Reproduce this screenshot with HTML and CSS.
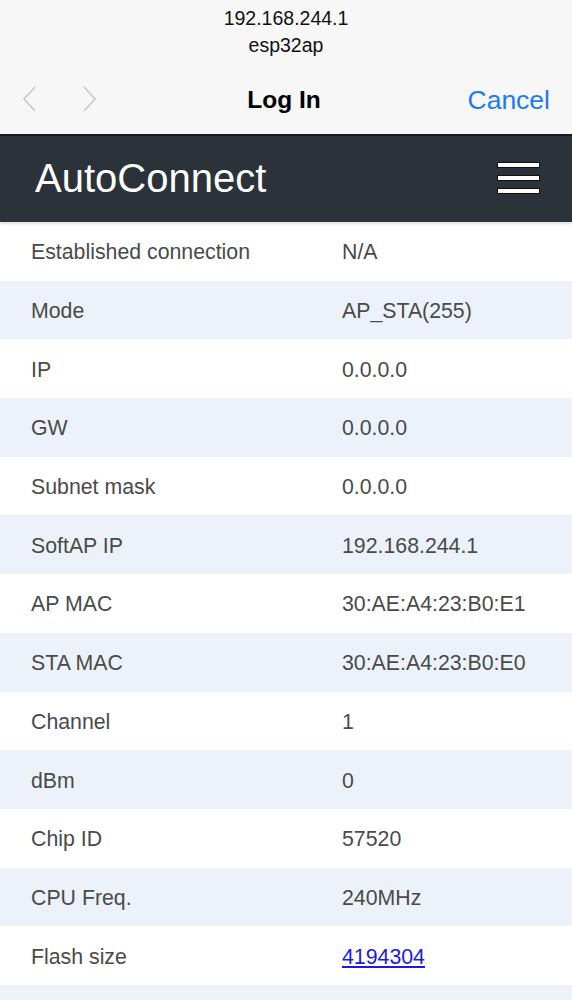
FILE: index.html
```html
<!DOCTYPE html>
<html>
<head>
<meta charset="utf-8">
<link rel="stylesheet" href="styles.css">
</head>
<body>
<div class="browser">
  <div class="addr">
    <div class="host">192.168.244.1</div>
    <div class="ssid">esp32ap</div>
  </div>
  <div class="navrow">
    <div class="arrows">
      <svg width="16" height="28" viewBox="0 0 16 28"><path d="M14 2 L3 14 L14 26" fill="none" stroke="#c8c8c8" stroke-width="1.6"/></svg>
      <svg width="16" height="28" viewBox="0 0 16 28"><path d="M2 2 L13 14 L2 26" fill="none" stroke="#c8c8c8" stroke-width="1.6"/></svg>
    </div>
    <div class="title">Log In</div>
    <div class="cancel">Cancel</div>
  </div>
</div>
<div class="menubar">
  <div class="brand">AutoConnect</div>
  <div class="burger"><span></span><span></span><span></span></div>
</div>
<div class="info">
  <div class="row"><div class="k">Established connection</div><div class="v">N/A</div></div>
  <div class="row"><div class="k">Mode</div><div class="v">AP_STA(255)</div></div>
  <div class="row"><div class="k">IP</div><div class="v">0.0.0.0</div></div>
  <div class="row"><div class="k">GW</div><div class="v">0.0.0.0</div></div>
  <div class="row"><div class="k">Subnet mask</div><div class="v">0.0.0.0</div></div>
  <div class="row"><div class="k">SoftAP IP</div><div class="v">192.168.244.1</div></div>
  <div class="row"><div class="k">AP MAC</div><div class="v">30:AE:A4:23:B0:E1</div></div>
  <div class="row"><div class="k">STA MAC</div><div class="v">30:AE:A4:23:B0:E0</div></div>
  <div class="row"><div class="k">Channel</div><div class="v">1</div></div>
  <div class="row"><div class="k">dBm</div><div class="v">0</div></div>
  <div class="row"><div class="k">Chip ID</div><div class="v">57520</div></div>
  <div class="row"><div class="k">CPU Freq.</div><div class="v">240MHz</div></div>
  <div class="row"><div class="k">Flash size</div><div class="v"><a href="#">4194304</a></div></div>
  <div class="row"><div class="k"></div><div class="v"></div></div>
</div>
</body>
</html>
```
FILE: styles.css
```css
* { box-sizing: border-box; }
html, body { margin: 0; padding: 0; }
body {
  font-family: "Liberation Sans", Arial, sans-serif;
  background: #fff;
  width: 572px;
  overflow: hidden;
}
.browser {
  background: #f7f7f7;
  height: 134px;
  display: flex;
  flex-direction: column;
}
.addr {
  padding-top: 5px;
  text-align: center;
  color: #111;
  font-size: 19.5px;
  line-height: 27px;
}
.navrow {
  display: flex;
  align-items: center;
  height: 40px;
  margin-top: 21px;
  padding: 0 22px 0 21px;
  position: relative;
}
.arrows {
  display: flex;
  gap: 45px;
  width: 140px;
  margin-top: -2px;
}
.title {
  flex: 1;
  text-align: center;
  font-size: 24.5px;
  font-weight: bold;
  color: #000;
  margin-right: 140px;
  margin-left: -3px;
}
.cancel {
  position: absolute;
  right: 22px;
  font-size: 26.5px;
  color: #1a7cf5;
}
.menubar {
  height: 88px;
  background: #2b323a;
  border-top: 2px solid #161b20;
  box-shadow: 0 2px 2px rgba(0,0,0,0.12);
  display: flex;
  align-items: center;
  justify-content: space-between;
  padding: 0 33px 0 35px;
  position: relative;
}
.brand {
  color: #fff;
  font-size: 40px;
  margin-top: -1px;
}
.burger {
  display: flex;
  flex-direction: column;
  gap: 9px;
  margin-top: -2px;
}
.burger span {
  display: block;
  width: 41px;
  height: 4px;
  background: #fff;
  box-shadow: 0 0 0 1px #111;
}
.row {
  display: flex;
  align-items: center;
  height: 58.7px;
  padding-top: 3px;
  font-size: 21.3px;
  color: #4a4a4a;
}
.row:nth-child(even) { background: #edf2fa; }
.k { width: 342px; padding-left: 31px; }
.v { flex: 1; }
.v a { color: #1a1ae6; text-decoration: underline; }
```
